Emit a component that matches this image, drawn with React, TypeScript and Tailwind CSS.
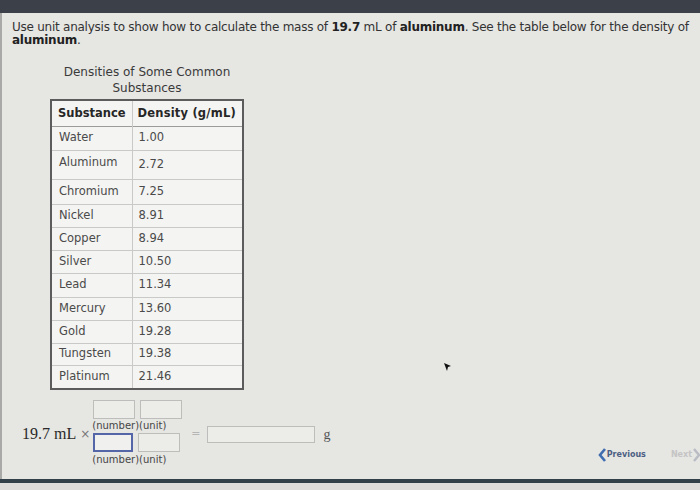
import React from "react";

type Row = { name: string; density: string; h: string; top?: boolean };

const rows: Row[] = [
  { name: "Water", density: "1.00", h: "h-[24px]" },
  { name: "Aluminum", density: "2.72", h: "h-[29px]", top: true },
  { name: "Chromium", density: "7.25", h: "h-[25px]" },
  { name: "Nickel", density: "8.91", h: "h-[23px]" },
  { name: "Copper", density: "8.94", h: "h-[23px]" },
  { name: "Silver", density: "10.50", h: "h-[23px]" },
  { name: "Lead", density: "11.34", h: "h-[24px]" },
  { name: "Mercury", density: "13.60", h: "h-[23px]" },
  { name: "Gold", density: "19.28", h: "h-[23px]" },
  { name: "Tungsten", density: "19.38", h: "h-[22px]" },
  { name: "Platinum", density: "21.46", h: "h-[24px]" },
];

function Box({ focused }: { focused?: boolean }) {
  return (
    <div
      className={
        focused
          ? "w-[40px] h-[19px] border-2 border-[#5566a8] bg-[#f0f0ee]"
          : "w-[42px] h-[19px] border border-[#bdbdbb] bg-[#ecece9]"
      }
    />
  );
}

function DensityTable() {
  return (
    <div className="ml-[48px] w-[194px]">
      <div className="text-center text-[12px] leading-[16px] text-[#3a3a3a] px-[10px]">
        Densities of Some Common Substances
      </div>
      <table className="mt-[3px] w-[194px] border-collapse border-2 border-[#5c5c5c] bg-[#f4f4f2] text-[11.5px] text-[#4a4a4a]">
        <thead>
          <tr className="h-[26px] border-b border-[#9c9c9c]">
            <th className="w-[81px] pl-[6px] text-left font-bold text-[#262626] border-r border-[#c9c9c7]">
              Substance
            </th>
            <th className="pl-[5px] text-left font-bold text-[#262626] tracking-[0.2px]">
              Density (g/mL)
            </th>
          </tr>
        </thead>
        <tbody>
          {rows.map((r) => (
            <tr key={r.name} className={`${r.h} border-b border-[#c9c9c7]`}>
              <td
                className={`pl-[7px] border-r border-[#c9c9c7] ${
                  r.top ? "align-top pt-[3px]" : "align-middle"
                }`}
              >
                {r.name}
              </td>
              <td className="pl-[6px] align-middle">{r.density}</td>
            </tr>
          ))}
        </tbody>
      </table>
    </div>
  );
}

function Equation() {
  return (
    <div className="flex items-center ml-[20px]">
      <span className="font-['Liberation_Serif',serif] text-[16px] text-[#2a2a2a] mr-[4px]">
        19.7 mL
      </span>
      <span className="text-[12px] text-[#777] mr-[3px]">×</span>
      <div className="flex flex-col">
        <div className="flex gap-[5px]">
          <Box />
          <Box />
        </div>
        <div className="h-[14px] text-[10px] leading-[14px] text-[#454545] -ml-[1px]">
          (number)(unit)
        </div>
        <div className="flex gap-[5px]">
          <Box focused />
          <Box />
        </div>
        <div className="h-[16px] text-[10px] leading-[16px] text-[#454545] -ml-[1px]">
          (number)(unit)
        </div>
      </div>
      <span className="ml-[9px] mr-[6px] text-[11px] text-[#b5b5b5]">=</span>
      <div className="w-[108px] h-[17px] border border-[#bdbdbb] bg-[#ecece9]" />
      <span className="ml-[9px] font-['Liberation_Serif',serif] text-[14px] text-[#555]">
        g
      </span>
    </div>
  );
}

function Nav() {
  return (
    <div className="flex items-center mb-[6px] text-[8px] font-semibold">
      <span className="flex items-center text-[#4d5f82]">
        <svg width="8" height="14" viewBox="0 0 8 14" className="mr-[1px]">
          <path d="M7 1 L2 7 L7 13" fill="none" stroke="#3f6db0" strokeWidth="2.6" />
        </svg>
        Previous
      </span>
      <span className="ml-[25px] flex items-center text-[#c4c4c4]">
        Next
        <svg width="7" height="14" viewBox="0 0 7 14" className="ml-[1px]">
          <path d="M1 1 L6 7 L1 13" fill="none" stroke="#b9bcc4" strokeWidth="2.4" />
        </svg>
      </span>
    </div>
  );
}

export default function App() {
  return (
    <div className="relative w-[700px] h-[490px] overflow-hidden bg-[#e6e6e3] font-['DejaVu_Sans',Verdana,sans-serif]">
      <div className="h-[13px] bg-[#3c4149]" />
      <div className="border-l-2 border-[#a9a9a7]">
        <p className="pl-[10px] pr-[4px] pt-[8px] text-[12px] leading-[13px] text-[#333] tracking-[-0.25px]">
          Use unit analysis to show how to calculate the mass of{" "}
          <b className="text-[#222]">19.7</b> mL of{" "}
          <b className="text-[#222]">aluminum</b>. See the table below for the
          density of <b className="text-[#222]">aluminum</b>.
        </p>
        <div className="mt-[17px]">
          <DensityTable />
        </div>
        <div className="mt-[10px] flex items-end justify-between">
          <Equation />
          <Nav />
        </div>
        <div className="h-[11px]" />
      </div>
      <div className="h-[4px] bg-[#32404a]" />
      <div className="h-[20px] bg-[#dcdcda]" />
      <svg
        width="9"
        height="10"
        viewBox="0 0 9 10"
        className="absolute left-[443px] top-[362px]"
      >
        <path d="M1 1 L8 4 L5 5 L4 9 Z" fill="#111" />
      </svg>
    </div>
  );
}
